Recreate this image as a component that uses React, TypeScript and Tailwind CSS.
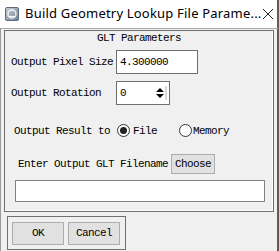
import React from "react";

const mono = { fontFamily: '"Liberation Mono", "DejaVu Sans Mono", monospace' };

function Radio({ checked }: { checked: boolean }) {
  return (
    <svg width="13" height="13" viewBox="0 0 13 13" className="shrink-0">
      <circle cx="6.5" cy="6.5" r="6" fill="#fff" stroke="#333" strokeWidth="1" />
      {checked && <circle cx="6.5" cy="6.5" r="3.5" fill="#222" />}
    </svg>
  );
}

export default function App() {
  return (
    <div
      className="w-[279px] h-[251px] bg-[#f0f0f0] flex flex-col overflow-hidden text-black text-[11px] tracking-[-0.6px]"
      style={mono}
    >
      {/* Title bar */}
      <div className="h-[29px] shrink-0 bg-white border-b border-[#a8a8a8] flex items-center pl-[5px] pr-[18px] border-r-[2px] border-r-[#5c5c5c]">
        <svg width="14" height="14" viewBox="0 0 14 14" className="shrink-0">
          <defs>
            <linearGradient id="g" x1="0" y1="0" x2="1" y2="1">
              <stop offset="0" stopColor="#c9d3dc" />
              <stop offset="1" stopColor="#6f8090" />
            </linearGradient>
          </defs>
          <rect x="0.5" y="0.5" width="13" height="13" rx="1.5" fill="url(#g)" stroke="#5d6b78" />
          <circle cx="7" cy="7" r="4" fill="none" stroke="#f4f6f8" strokeWidth="1.3" />
          <path d="M3.5 9.5 L10.5 9.5" stroke="#f4f6f8" strokeWidth="1.2" />
        </svg>
        <span
          className="ml-[6px] text-[13px] tracking-[0.2px] whitespace-nowrap"
          style={{ fontFamily: '"Noto Sans", "Liberation Sans", sans-serif' }}
        >
          Build Geometry Lookup File Parame...
        </span>
        <svg width="12" height="12" viewBox="0 0 12 12" className="ml-auto shrink-0">
          <path d="M1 1 L11 11 M11 1 L1 11" stroke="#222" strokeWidth="1" />
        </svg>
      </div>

      {/* Body */}
      <div className="flex-1 flex flex-col pl-[3px] pt-[1px] border-l border-[#9a9a9a] border-r-[2px] border-r-[#5c5c5c]">
        {/* GLT Parameters panel */}
        <div className="w-[270px] h-[182px] border border-[#707070] shadow-[inset_-1px_-1px_0_#ffffff] flex flex-col">
          <div className="text-center leading-[12px] mt-[1px]">GLT Parameters</div>

          <div className="flex items-center mt-[6px] pl-[6px]">
            <span className="w-[105px] leading-[12px]">Output Pixel Size</span>
            <div className="w-[82px] h-[24px] bg-white border border-[#6e6e6e] flex items-center pl-[3px]">
              4.300000
            </div>
          </div>

          <div className="flex items-center mt-[7px] pl-[6px]">
            <span className="w-[105px] leading-[12px]">Output Rotation</span>
            <div className="w-[54px] h-[24px] bg-white border border-[#6e6e6e] flex items-center pl-[3px]">
              <span>0</span>
              <svg width="12" height="14" viewBox="0 0 12 14" className="ml-auto mr-[2px]">
                <rect x="10" y="0" width="2" height="14" fill="#d8d8d8" />
                <path d="M1 6 L5 2 L9 6 Z" fill="#000" />
                <path d="M1 8 L5 12 L9 8 Z" fill="#000" />
              </svg>
            </div>
          </div>

          <div className="flex items-center mt-[19px] pl-[9px] leading-[12px]">
            <span className="w-[103px]">Output Result to</span>
            <Radio checked />
            <span className="ml-[3px] w-[46px]">File</span>
            <Radio checked={false} />
            <span className="ml-[1px]">Memory</span>
          </div>

          <div className="flex items-center mt-[17px] pl-[13px] leading-[12px]">
            <span className="w-[153px]">Enter Output GLT Filename</span>
            <div className="w-[44px] h-[20px] bg-[#e1e1e1] border border-[#adadad] flex items-center justify-center">
              Choose
            </div>
          </div>

          <div className="ml-[10px] mt-[6px] w-[250px] h-[22px] bg-white border border-[#828282]" />
        </div>

        {/* Buttons panel */}
        <div className="ml-[3px] mt-[4px] w-[119px] h-[34px] border border-[#707070] flex items-center pl-[4px] gap-[4px]">
          <div className="w-[52px] h-[23px] bg-[#e1e1e1] border border-[#adadad] flex items-center justify-center">
            OK
          </div>
          <div className="w-[52px] h-[23px] bg-[#e1e1e1] border border-[#adadad] flex items-center justify-center">
            Cancel
          </div>
        </div>
      </div>
    </div>
  );
}
